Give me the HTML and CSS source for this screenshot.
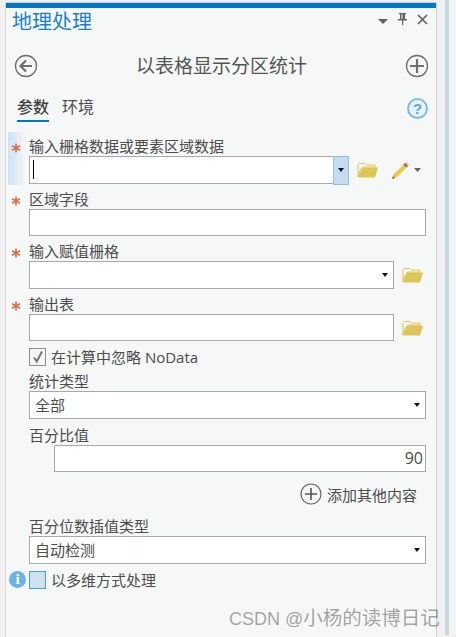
FILE: index.html
```html
<!DOCTYPE html>
<html lang="zh">
<head>
<meta charset="utf-8">
<title>地理处理</title>
<link rel="stylesheet" href="styles.css">
</head>
<body>
<div class="screen">
  <main class="pane">
    <div class="topbar"></div>
    <header class="head">
      <h1 class="pane-title">地理处理</h1>
      <div class="win-tools">
        <svg class="dd" width="10" height="5" viewBox="0 0 10 5"><path d="M0 0h10L5 5z" fill="#5f6368"/></svg>
        <svg width="9" height="12" viewBox="0 0 9 12"><path d="M1 0h7v1.200H7V6h2v1.500H0V6h2V1.200H1zM3.500 1.200V6h1V1.200zM4 7.500h1.200V12H4z" fill="#5f6368"/></svg>
        <svg width="11" height="11" viewBox="0 0 11 11"><path d="M1 1l9 9M10 1l-9 9" stroke="#5f6368" stroke-width="1.700"/></svg>
      </div>
    </header>
    <div class="tool-row">
      <svg class="round" width="24" height="24" viewBox="0 0 24 24"><circle cx="12" cy="12" r="10.500" fill="none" stroke="#6e6e6e" stroke-width="1.300"/><path d="M18 12H7M12 6.500L6.500 12l5.500 5.500" fill="none" stroke="#6e6e6e" stroke-width="2.200"/></svg>
      <h2 class="tool-title">以表格显示分区统计</h2>
      <svg class="round" width="24" height="24" viewBox="0 0 24 24"><circle cx="12" cy="12" r="10.500" fill="none" stroke="#6e6e6e" stroke-width="1.300"/><path d="M12 5v14M5 12h14" fill="none" stroke="#6e6e6e" stroke-width="2.200"/></svg>
    </div>
    <div class="tabs">
      <span class="tab active">参数</span>
      <span class="tab">环境</span>
      <span class="help">?</span>
    </div>
    <section class="form">
      <div class="field focused">
        <label class="label"><svg class="star" width="10" height="10" viewBox="0 0 10 10"><use href="#star"/></svg>输入栅格数据或要素区域数据</label>
        <div class="line">
          <div class="input combo-focus"><span class="caret"></span><span class="drop hot"><i class="tri"></i></span></div>
          <svg class="folder" width="21" height="16" viewBox="0 0 21 16"><use href="#folder"/></svg>
          <span class="pencil">
            <svg width="19" height="19" viewBox="0 0 19 19"><path d="M1 18l1.500-4.500L13 3l3 3L5.500 16.500z" fill="#e6c94f"/><path d="M1 18l1-3 2 2z" fill="#7a6a50"/><path d="M13 3l2-2 3 3-2 2z" fill="#e8a79b"/><path d="M12.500 3.500l3 3 1.200-1.200-3-3z" fill="#6a6a6a"/></svg>
            <svg width="7" height="4" viewBox="0 0 7 4"><path d="M0 0h7L3.500 4z" fill="#666"/></svg>
          </span>
        </div>
      </div>
      <div class="field">
        <label class="label"><svg class="star" width="10" height="10" viewBox="0 0 10 10"><use href="#star"/></svg>区域字段</label>
        <div class="line"><div class="input"></div></div>
      </div>
      <div class="field">
        <label class="label"><svg class="star" width="10" height="10" viewBox="0 0 10 10"><use href="#star"/></svg>输入赋值栅格</label>
        <div class="line">
          <div class="input tall"><span class="drop"><i class="tri"></i></span></div>
          <svg class="folder end" width="21" height="16" viewBox="0 0 21 16"><use href="#folder"/></svg>
        </div>
      </div>
      <div class="field">
        <label class="label"><svg class="star" width="10" height="10" viewBox="0 0 10 10"><use href="#star"/></svg>输出表</label>
        <div class="line">
          <div class="input"></div>
          <svg class="folder end" width="21" height="16" viewBox="0 0 21 16"><use href="#folder"/></svg>
        </div>
      </div>
      <div class="check-row first">
        <span class="box"><svg width="14" height="14" viewBox="0 0 14 14"><path d="M3 7.500l2.800 4L11 1.500" fill="none" stroke="#777" stroke-width="2"/></svg></span>
        <span>在计算中忽略 NoData</span>
      </div>
      <div class="field">
        <label class="label">统计类型</label>
        <div class="line"><div class="input tall value">全部<span class="drop"><i class="tri"></i></span></div></div>
      </div>
      <div class="field wide-gap">
        <label class="label">百分比值</label>
        <div class="line indent"><div class="input number">90</div></div>
      </div>
      <div class="add-row">
        <svg width="22" height="22" viewBox="0 0 22 22"><circle cx="11" cy="11" r="10" fill="none" stroke="#666" stroke-width="1.200"/><path d="M11 5v12M5 11h12" stroke="#555" stroke-width="1.600"/></svg>
        <span>添加其他内容</span>
      </div>
      <div class="field after-add">
        <label class="label">百分位数插值类型</label>
        <div class="line"><div class="input tall value">自动检测<span class="drop"><i class="tri"></i></span></div></div>
      </div>
      <div class="check-row last">
        <span class="info">i</span>
        <span class="box blue"></span>
        <span>以多维方式处理</span>
      </div>
    </section>
  </main>
  <aside class="edge"></aside>
  <div class="watermark">CSDN @<span class="wm-cjk">小杨的读博日记</span></div>
</div>
<svg width="0" height="0" class="defs">
  <symbol id="folder" viewBox="0 0 21 16">
    <path d="M1 15V2.500L2 1.500h6l1.500 1.500H18v2H6L3 8z" fill="none" stroke="#dcc658" stroke-width="1"/>
    <path d="M1 15.500L5 5.500h16l-3 10z" fill="#dcc658"/>
  </symbol>
  <symbol id="star" viewBox="0 0 10 10">
    <path d="M5 .5v9M1 2.700l8 4.600M9 2.700L1 7.300" stroke="#d9734e" stroke-width="1.700"/>
  </symbol>
</svg>
</body>
</html>
```
FILE: styles.css
```css
* { box-sizing: border-box; }
html, body { margin: 0; padding: 0; }
body {
  width: 456px;
  height: 637px;
  overflow: hidden;
  background: #f1f1f1;
  font-family: "Open Sans", "Noto Sans CJK SC", sans-serif;
  color: #4c4c4c;
  font-size: 15px;
}
.screen {
  position: relative;
  display: flex;
  width: 456px;
  height: 637px;
  padding: 2px 0 0 5px;
}
.defs { position: absolute; }
.pane {
  width: 432px;
  height: 635px;
  background: #f6f8f8;
  border-left: 1px solid #d8d8d8;
  border-right: 1px solid #cfcfcf;
  border-top: 1px solid #d0d0d0;
}
.topbar { height: 5px; background: #0078c9; }
.head {
  display: flex;
  justify-content: space-between;
  align-items: flex-start;
  height: 46px;
  padding: 0 8px 0 6px;
}
.pane-title {
  margin: 0;
  font-size: 20px;
  font-weight: 400;
  line-height: 28px;
  color: #1a7fd0;
}
.win-tools {
  display: flex;
  align-items: center;
  gap: 10px;
  height: 12px;
  margin-top: 5px;
}
.dd { margin-top: 5px; }
.tool-row {
  display: flex;
  align-items: center;
  justify-content: space-between;
  height: 24px;
  padding: 0 7px 0 8px;
}
.tool-title {
  margin: 0;
  font-size: 19px;
  font-weight: 400;
  color: #545454;
  line-height: 24px;
}
.tabs {
  display: flex;
  align-items: flex-start;
  gap: 13px;
  height: 42px;
  margin-top: 17px;
  padding: 0 8px 0 11px;
}
.tab {
  font-size: 16px;
  line-height: 24px;
  height: 27px;
}
.tab.active {
  font-weight: 500;
  border-bottom: 2px solid #0078c9;
  color: #3f3f3f;
}
.help {
  margin-left: auto;
  margin-top: 3px;
  width: 21px;
  height: 21px;
  border-radius: 50%;
  border: 2px solid #7fbbe6;
  color: #5ba6dd;
  font: 700 15px/17px "Liberation Sans", sans-serif;
  text-align: center;
  background: #e8f3fb;
}
.form { display: flex; flex-direction: column; padding: 0 0 0 23px; }
.field { position: relative; padding-right: 10px; margin-top: 6px; }
.field:first-child { margin-top: 0; }
.field.wide-gap { margin-top: 7px; }
.field.after-add { margin-top: 12px; }
.label {
  position: relative;
  display: block;
  height: 19px;
  font-size: 15px;
  line-height: 19px;
  white-space: nowrap;
}
.star {
  position: absolute;
  left: -18px;
  top: 6px;
}
.focused::before {
  content: "";
  position: absolute;
  left: -21px;
  top: -5px;
  width: 19px;
  height: 53px;
  background: linear-gradient(90deg, #cfe2f3, #f6f8f8);
}
.line { position: relative; display: flex; align-items: center; gap: 8px; }
.line.indent { padding-left: 25px; }
.input {
  position: relative;
  flex: 1;
  height: 27px;
  background: #fff;
  border: 1.500px solid #a9a9a9;
}
.input.tall { height: 28px; }
.combo-focus { flex: none; width: 319px; height: 28px; margin-right: 1px; }
.value { padding-left: 5px; line-height: 27px; font-size: 15px; }
.number { text-align: right; padding-right: 2px; line-height: 24px; font-size: 16px; }
.caret {
  position: absolute;
  left: 3px;
  top: 3px;
  width: 1px;
  height: 19px;
  background: #000;
}
.drop {
  position: absolute;
  right: 0;
  top: 0;
  bottom: 0;
  width: 16px;
  display: flex;
  align-items: center;
  justify-content: center;
}
.drop.hot {
  right: -1.500px;
  top: -1.500px;
  bottom: -1.500px;
  background: #c7dcef;
  border: 1px solid #88c3f0;
}
.tri { width: 0; height: 0; border: 3.500px solid transparent; border-top: 4px solid #111; border-bottom: 0; }
.folder { flex: none; }
.folder.end { margin-right: 3px; }
.pencil { display: flex; align-items: center; gap: 4px; margin-left: 5px; }
.check-row {
  position: relative;
  display: flex;
  align-items: center;
  gap: 5px;
  height: 18px;
  line-height: 18px;
  font-size: 15px;
}
.check-row.first { margin-top: 7px; }
.check-row.last { margin-top: 7px; }
.box {
  width: 17px;
  height: 18px;
  background: #f5f5f5;
  border: 1.500px solid #8e8e8e;
  display: flex;
  align-items: center;
  justify-content: center;
}
.box.blue { background: #cfe0ef; border-color: #4a9fe0; }
.info {
  position: absolute;
  left: -20px;
  top: 0;
  width: 17px;
  height: 17px;
  border-radius: 50%;
  background: #6db3e3;
  color: #fff;
  font: 700 15px/17px "Liberation Serif", serif;
  text-align: center;
}
.add-row {
  display: flex;
  align-items: center;
  justify-content: flex-end;
  gap: 5px;
  height: 22px;
  margin-top: 11px;
  padding-right: 19px;
  font-size: 15px;
}
.edge {
  width: 19px;
  height: 100%;
  margin-top: -2px;
  background: linear-gradient(90deg, #f1f1f1 0 8px, #c3d9dd 8px 12px, #f4f4f4 12px);
}
.watermark {
  position: absolute;
  left: 229px;
  top: 606px;
  font-size: 18px;
  line-height: 24px;
  color: rgba(90, 90, 90, 0.55);
  font-family: "Liberation Sans", "Noto Sans CJK SC", sans-serif;
  white-space: nowrap;
}
.wm-cjk { font-size: 19.500px; }
```
